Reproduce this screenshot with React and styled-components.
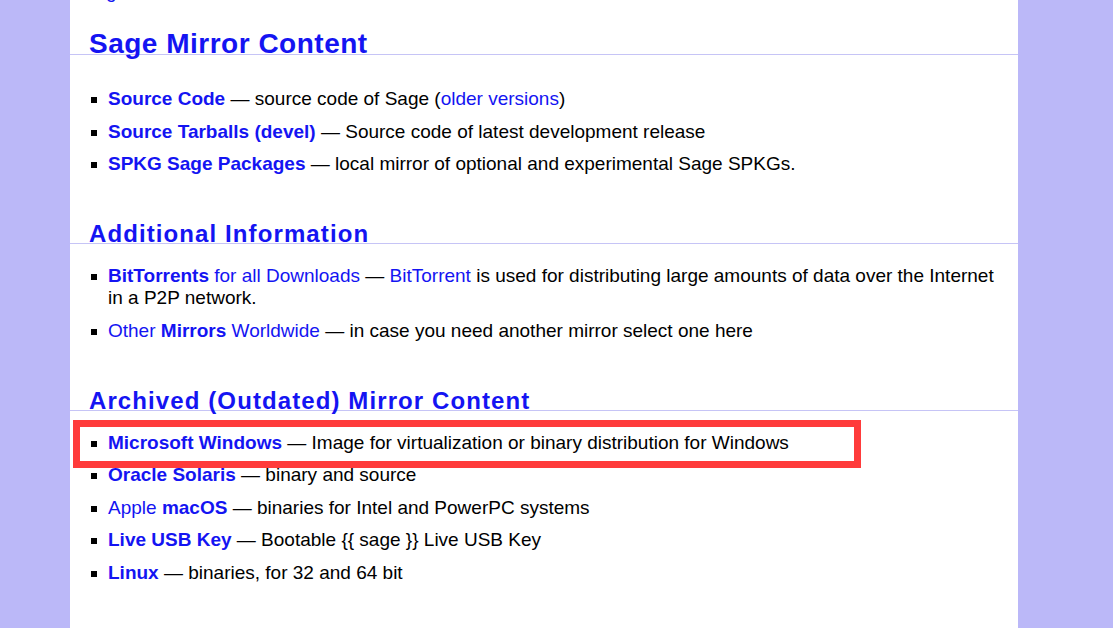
import React from "react";
import styled, { createGlobalStyle } from "styled-components";

const GlobalStyle = createGlobalStyle`
  html, body {
    margin: 0;
    padding: 0;
    background: #bbb8f8;
    font-family: "Liberation Sans", Arial, sans-serif;
    overflow: hidden;
  }
`;

const Column = styled.main`
  display: flow-root;
  margin-left: 70px;
  width: 948px;
  min-height: 100vh;
  background: #ffffff;
  color: #000;
  font-size: 19px;
  line-height: 22px;
`;

const TopLine = styled.p`
  margin: -19px 0 0;
  padding-left: 19px;
  height: 22px;
`;

const SectionTitle = styled.h2`
  margin: ${(p) => p.$top}px 0 0;
  padding-left: 19px;
  font-size: ${(p) => p.$size}px;
  line-height: ${(p) => p.$lh}px;
  letter-spacing: ${(p) => p.$ls}px;
  font-weight: bold;
  color: #1414f2;
  border-bottom: 1px solid #c6c4f6;
`;

const List = styled.ul`
  list-style: none;
  margin: ${(p) => p.$top}px 0 0;
  padding: 0 20px 0 38px;
  display: flex;
  flex-direction: column;
  gap: 10.5px;
`;

const Item = styled.li`
  position: relative;

  &::before {
    content: "";
    position: absolute;
    left: -17px;
    top: 9px;
    width: 6px;
    height: 6px;
    background: #000;
  }
`;

const Link = styled.a`
  color: #1414f2;
  text-decoration: none;
  font-weight: ${(p) => (p.$bold ? "bold" : "normal")};
`;

const Highlight = styled.span`
  position: absolute;
  left: -35px;
  top: -12px;
  width: 788px;
  height: 48px;
  box-sizing: border-box;
  border: 7px solid #ff3b3b;
  pointer-events: none;
`;

export default function App() {
  return (
    <>
      <GlobalStyle />
      <Column>
        <TopLine>
          <Link href="#">Signature</Link>
        </TopLine>

        <SectionTitle $top={30} $size={28} $lh={21} $ls={0.5}>
          Sage Mirror Content
        </SectionTitle>
        <List $top={33}>
          <Item>
            <Link $bold href="#">Source Code</Link> — source code of Sage (
            <Link href="#">older versions</Link>)
          </Item>
          <Item>
            <Link $bold href="#">Source Tarballs (devel)</Link> — Source code of
            latest development release
          </Item>
          <Item>
            <Link $bold href="#">SPKG Sage Packages</Link> — local mirror of
            optional and experimental Sage SPKGs.
          </Item>
        </List>

        <SectionTitle as="h3" $top={50} $size={24} $lh={18} $ls={1.1}>
          Additional Information
        </SectionTitle>
        <List $top={21}>
          <Item>
            <Link href="#">
              <Link as="span" $bold>BitTorrents</Link> for all Downloads
            </Link>{" "}
            — <Link href="#">BitTorrent</Link> is used for distributing large
            amounts of data over the Internet in a P2P network.
          </Item>
          <Item>
            <Link href="#">
              Other <Link as="span" $bold>Mirrors</Link> Worldwide
            </Link>{" "}
            — in case you need another mirror select one here
          </Item>
        </List>

        <SectionTitle as="h3" $top={50} $size={24} $lh={18} $ls={1.1}>
          Archived (Outdated) Mirror Content
        </SectionTitle>
        <List $top={21}>
          <Item>
            <Highlight />
            <Link $bold href="#">Microsoft Windows</Link> — Image for
            virtualization or binary distribution for Windows
          </Item>
          <Item>
            <Link $bold href="#">Oracle Solaris</Link> — binary and source
          </Item>
          <Item>
            <Link href="#">
              Apple <Link as="span" $bold>macOS</Link>
            </Link>{" "}
            — binaries for Intel and PowerPC systems
          </Item>
          <Item>
            <Link $bold href="#">Live USB Key</Link> — Bootable {"{{ sage }}"}{" "}
            Live USB Key
          </Item>
          <Item>
            <Link $bold href="#">Linux</Link> — binaries, for 32 and 64 bit
          </Item>
        </List>
      </Column>
    </>
  );
}
